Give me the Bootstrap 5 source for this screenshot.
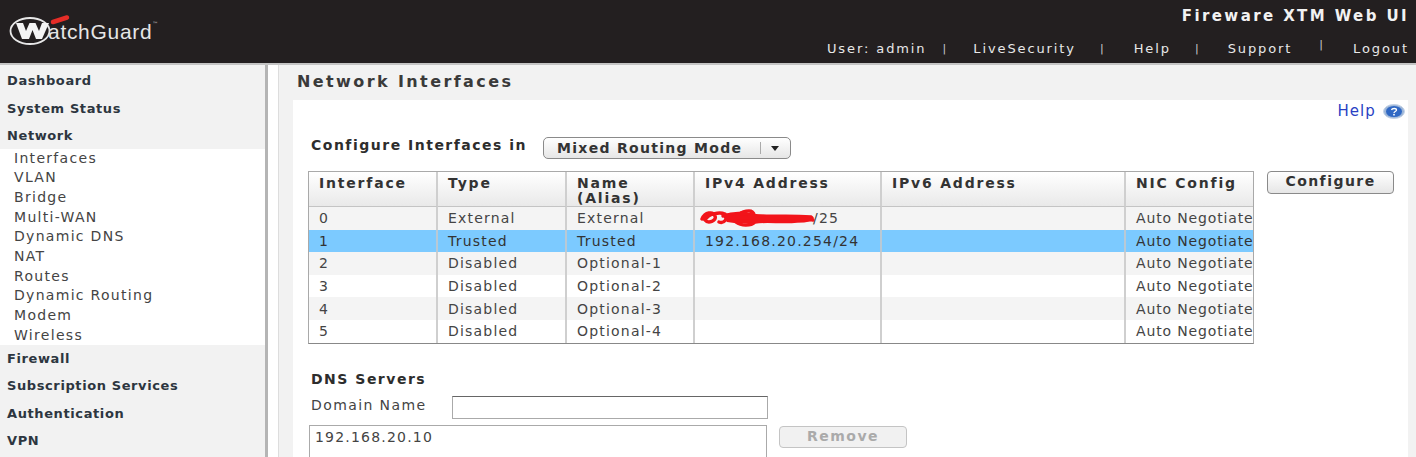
<!DOCTYPE html>
<html lang="en"><head><meta charset="utf-8"><title>Network Interfaces</title>
<link rel="stylesheet" href="https://cdn.jsdelivr.net/npm/bootstrap@5.3.0/dist/css/bootstrap.min.css">
<style>
html,body{height:457px;overflow:hidden}
body{font-family:"DejaVu Sans",Verdana,sans-serif;font-size:14px;color:#333;background:#fff}
.topbar{height:65px;background:#231f20;border-bottom:2px solid #c4c4c4;color:#e8e8e8;padding:0 7px 0 9px}
.logo-word{font-family:"Liberation Sans",Arial,sans-serif;font-size:21px;color:#e6e6e6;letter-spacing:.7px;margin:2px 0 0 -25px}
.tm{font-size:6px;margin-top:5px;color:#ccc}
.prod{font-weight:700;font-size:15px;color:#f2f2f2;letter-spacing:2.4px;padding-top:7px;line-height:18px}
.toplinks{font-size:13px;line-height:18px;padding-bottom:5px;letter-spacing:1.9px}
.toplinks span{white-space:nowrap}
.sep{color:#ccc;font-size:11px;letter-spacing:0}
.sep-a{margin:0 27px 0 16px}
.sep-b{margin:0 30px 0 24px}
.sep-c{margin:0 29px 0 24px}
.sep-d{margin:-8px 30px 0 27px}
.shell{height:392px;overflow:hidden}
.sidenav{width:268px;flex:none;background:#f2f2f2;border-right:3px solid #b5b5b5;padding-top:2px}
.sec{height:27.5px;line-height:27px;padding-left:7px;font-weight:700;color:#2d3640;font-size:13px;letter-spacing:.6px}
.subs{background:#fff;height:196px;margin-top:-1px}
.subs div{height:19.7px;line-height:19.7px;padding-left:14px;color:#444;font-size:14px;letter-spacing:1.3px;white-space:nowrap}
.gutter{width:10px;flex:none;background:#fff}
.mainarea{flex:1;background:#f2f2f2;border-left:1px solid #ddd;padding:0 8px 0 14px;min-width:0}
.pagetitle{height:35px;line-height:34px;font-weight:700;font-size:16px;color:#3a3a3a;margin-left:4px;letter-spacing:2.4px;white-space:nowrap}
.sheet{background:#fff;height:400px;padding:0 0 0 15px}
.helpline{height:22px;padding-right:3px;color:#2a3fc4;font-size:15px;letter-spacing:1.1px;gap:7px}
.cfgline{height:49px;padding:13px 0 0 3px;align-items:flex-start}
.cfglabel{font-weight:700;font-size:14px;line-height:21px;color:#2d2d2d;width:232px;letter-spacing:1.5px;white-space:nowrap}
.modesel{width:248px;height:22px;margin-top:2px;border:1px solid #8a8a8a;border-radius:5px;background:linear-gradient(#fff,#e6e6e6);font-weight:700;font-size:14px;color:#333;padding-left:13px;line-height:20px;letter-spacing:1.3px;white-space:nowrap}
.caretbox{border-left:1px solid #aaa;height:12px;width:30px;padding-left:10px;display:flex;align-items:center}
.tri{width:0;height:0;border-left:4px solid transparent;border-right:4px solid transparent;border-top:5px solid #222}
.tblrow{gap:13px;align-items:flex-start}
.grid-tb{border-collapse:separate;border-spacing:0;table-layout:fixed;width:946px;border:1px solid #a9a9a9;border-bottom-color:#888;font-size:14px;letter-spacing:1.2px;margin:0}
.grid-tb th{height:35px;vertical-align:top;padding:4px 6px 0 10px;font-weight:700;line-height:15px;color:#333;background:linear-gradient(#fff,#e9e9e9);border-right:2px solid #cfcfcf;border-bottom:1px solid #c4c4c4;letter-spacing:1.8px;white-space:nowrap}
.grid-tb td{height:22.6px;padding:0 0 0 10px;line-height:20px;color:#444;border-right:2px solid #cfcfcf;white-space:nowrap;overflow:hidden;vertical-align:middle}
.grid-tb th:last-child,.grid-tb td:last-child{border-right:0;letter-spacing:.85px}
.grid-tb th:last-child{letter-spacing:1.8px}
.grid-tb tr.alt td{background:#f4f4f4}
.grid-tb tr.picked td{background:#7ccaff;border-right-color:#b9c9d5;color:#333}
.scribble{vertical-align:-4px;margin-left:-6px;margin-right:-4px}
.cfgbtn{width:127px;height:23px;border:1px solid #8a8a8a;border-radius:4px;background:linear-gradient(#fff,#e6e6e6);font-weight:700;color:#333;line-height:19px;text-align:center;letter-spacing:1.45px}
.dnshead{font-weight:700;color:#2d2d2d;margin:27px 0 0 3px;line-height:16px;letter-spacing:1.5px}
.domainline{margin:9px 0 0 3px;height:23px}
.domainline label{width:141px;letter-spacing:1.4px;color:#444;white-space:nowrap;padding-bottom:4px}
.fakeinput{width:316px;height:23px;border:1px solid #aaa;border-top-color:#666;background:#fff}
.dnsline{margin:6px 0 0 1px;gap:12px}
.dnsbox{width:458px;height:60px;border:1px solid #aaa;background:#fff;padding:1px 0 0 5px;color:#444;letter-spacing:1.2px;line-height:20px}
.rembtn{width:128px;height:22px;margin-top:1px;border:1px solid #c4c4c4;border-radius:4px;background:#f1f1f1;color:#aaa;font-weight:700;text-align:center;line-height:19px;letter-spacing:1.45px}
</style></head>
<body>
<header class="topbar d-flex justify-content-between">
  <div class="d-flex align-items-start" style="padding-top:14px">
    <svg width="64" height="32" viewBox="0 0 64 32" aria-hidden="true">
      <ellipse cx="21" cy="17" ry="13" rx="19.500" fill="#231f20" stroke="#e8e8e8" stroke-width="1.800"/>
      <path d="M7 9 L13 25 L20 25 L23.500 16 L27 25 L33 25 L40 9 L33 9 L30 17 L26.500 9 L20.500 9 L17 17 L14 9 Z" fill="#f4f4f4"/>
      <path d="M44 8 L58 3.500" stroke="#e52d27" stroke-width="4.500" stroke-linecap="round"/>
    </svg>
    <span class="logo-word">atchGuard</span><span class="tm">™</span>
  </div>
  <div class="d-flex flex-column justify-content-between align-items-end">
    <div class="prod">Fireware XTM Web UI</div>
    <div class="toplinks d-flex align-items-center">
      <span>User: admin</span><span class="sep sep-a">|</span>
      <span>LiveSecurity</span><span class="sep sep-b">|</span>
      <span>Help</span><span class="sep sep-c">|</span>
      <span>Support</span><span class="sep sep-d">|</span>
      <span>Logout</span>
    </div>
  </div>
</header>
<div class="shell d-flex">
  <nav class="sidenav">
    <div class="sec">Dashboard</div>
    <div class="sec">System Status</div>
    <div class="sec">Network</div>
    <div class="subs">
      <div>Interfaces</div><div>VLAN</div><div>Bridge</div><div>Multi-WAN</div><div>Dynamic DNS</div><div>NAT</div><div>Routes</div><div>Dynamic Routing</div><div>Modem</div><div>Wireless</div>
    </div>
    <div class="sec">Firewall</div>
    <div class="sec">Subscription Services</div>
    <div class="sec">Authentication</div>
    <div class="sec">VPN</div>
  </nav>
  <div class="gutter"></div>
  <main class="mainarea">
    <div class="pagetitle">Network Interfaces</div>
    <div class="sheet">
      <div class="helpline d-flex justify-content-end align-items-center">
        <span>Help</span>
        <svg width="22" height="15" viewBox="0 0 22 15" aria-hidden="true">
          <ellipse cx="11" cy="7.500" rx="10.500" ry="7" fill="#9db6d8" stroke="#c3d2e6"/>
          <ellipse cx="11" cy="7.500" rx="8" ry="5.600" fill="#2f68c4"/>
          <path d="M8.500 6C9 4 13.500 4 13.500 6C13.500 7.500 11 7.500 11 9" fill="none" stroke="#fff" stroke-width="1.300"/>
          <circle cx="11" cy="10.700" r=".9" fill="#fff"/>
        </svg>
      </div>
      <div class="cfgline d-flex">
        <div class="cfglabel">Configure Interfaces in</div>
        <div class="modesel d-flex justify-content-between align-items-center">
          <span>Mixed Routing Mode</span>
          <span class="caretbox"><span class="tri"></span></span>
        </div>
      </div>
      <div class="tblrow d-flex">
        <table class="grid-tb">
          <colgroup><col style="width:129px"><col style="width:129px"><col style="width:128px"><col style="width:187px"><col style="width:244px"><col style="width:127px"></colgroup>
          <thead><tr><th>Interface</th><th>Type</th><th>Name<br>(Alias)</th><th>IPv4 Address</th><th>IPv6 Address</th><th>NIC Config</th></tr></thead>
          <tbody>
            <tr class="alt"><td>0</td><td>External</td><td>External</td><td><svg class="scribble" width="118" height="18" viewBox="0 0 118 18" aria-hidden="true"><path d="M22 5C40 3 60 5 76 7C90 7 104 7 113 8L113 12C96 13 80 13 64 13C52 15 40 15 28 13Z" fill="#f2141a"/><path d="M3 10C6 3 14 2 16 7C18 12 9 15 6 11C10 4 21 3 26 5C30 9 25 15 20 13M24 7C36 3 44 4 58 7C72 8 88 6 112 8C116 10 108 12 98 12C84 14 70 11 56 13C52 17 42 17 37 13C35 8 42 2 50 2C56 2 57 10 54 14M30 9C46 7 64 11 80 9C94 7 104 10 114 11" fill="none" stroke="#f2141a" stroke-width="3.400" stroke-linecap="round"/></svg><span>/25</span></td><td></td><td>Auto Negotiate</td></tr>
            <tr class="picked"><td>1</td><td>Trusted</td><td>Trusted</td><td>192.168.20.254/24</td><td></td><td>Auto Negotiate</td></tr>
            <tr class="alt"><td>2</td><td>Disabled</td><td>Optional-1</td><td></td><td></td><td>Auto Negotiate</td></tr>
            <tr><td>3</td><td>Disabled</td><td>Optional-2</td><td></td><td></td><td>Auto Negotiate</td></tr>
            <tr class="alt"><td>4</td><td>Disabled</td><td>Optional-3</td><td></td><td></td><td>Auto Negotiate</td></tr>
            <tr><td>5</td><td>Disabled</td><td>Optional-4</td><td></td><td></td><td>Auto Negotiate</td></tr>
          </tbody>
        </table>
        <div class="cfgbtn">Configure</div>
      </div>
      <div class="dnshead">DNS Servers</div>
      <div class="domainline d-flex align-items-center">
        <label>Domain Name</label>
        <div class="fakeinput"></div>
      </div>
      <div class="dnsline d-flex align-items-start">
        <div class="dnsbox">192.168.20.10</div>
        <div class="rembtn">Remove</div>
      </div>
    </div>
  </main>
</div>
<script src="https://cdn.jsdelivr.net/npm/bootstrap@5.3.0/dist/js/bootstrap.bundle.min.js"></script>
</body></html>
